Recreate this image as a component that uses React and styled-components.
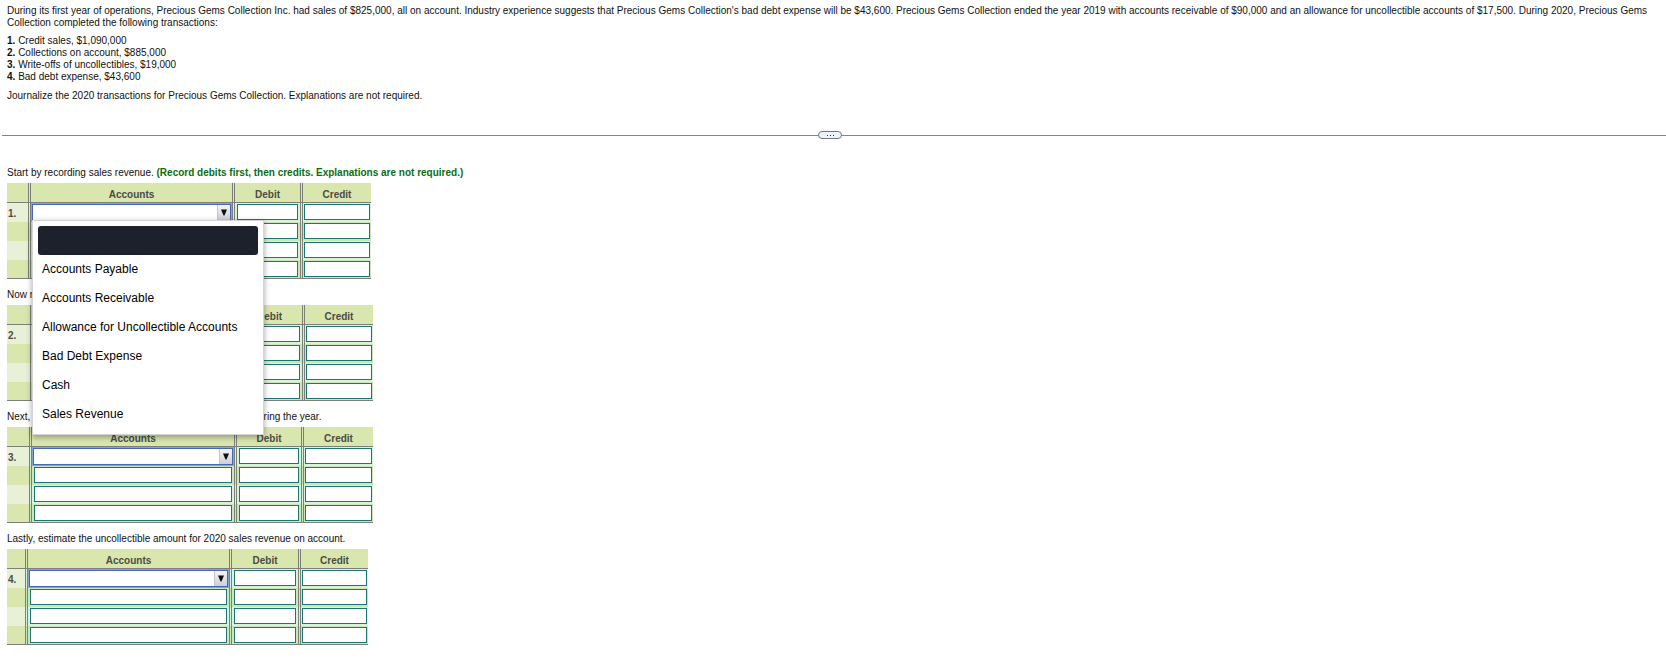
import React from 'react'
import { styled, createGlobalStyle } from 'styled-components'

const GlobalStyle = createGlobalStyle`
  * {
    box-sizing: border-box;
  }
  body {
    margin: 0;
    background-color: white;
    color: #111;
    font-family: "Liberation Sans", Arial, sans-serif;
    font-size: 10px;
    line-height: 12px;
  }
`;

const Page = styled.main`
  padding-top: 5px;
`;

const Problem = styled.section`
  padding: 0 7px;
`;

const Paragraph = styled.p`
  margin: 0 0 6px;
`;

const Transactions = styled.ol`
  margin: 0 0 7px;
  padding: 0;
  list-style: none;
`;

const Divider = styled.div`
  display: flex;
  align-items: center;
  height: 8px;
  margin: 29px 0 28px 2px;
`;

const Line = styled.span`
  flex: 1 1 ${({ $extra }) => $extra || 0}px;
  height: 1px;
  background-color: #7f8589;
`;

const Handle = styled.button`
  display: flex;
  align-items: center;
  justify-content: center;
  gap: 2px;
  width: 24px;
  height: 8px;
  padding: 0;
  border: 1px solid #6c7486;
  border-radius: 4px;
  background-color: #f0f3fb;
  cursor: row-resize;
`;

const Dot = styled.span`
  width: 1px;
  height: 1px;
  background-color: #2c3040;
`;

const Work = styled.section`
  padding: 0 7px 16px;
`;

const Entry = styled.div`
  display: flex;
  flex-direction: column;
  align-items: flex-start;
  margin-bottom: 10px;
`;

const Prompt = styled.p`
  margin: 0;
  height: 16px;
`;

const Hint = styled.strong`
  color: #0b6e12;
`;

const Journal = styled.table`
  table-layout: fixed;
  width: ${({ $width }) => $width}px;
  border-collapse: separate;
  border-spacing: 0;
  color: #4a4d45;
`;

const HeadCell = styled.th`
  width: ${({ $width }) => $width}px;
  height: 20px;
  padding: 4px 0 0;
  border-bottom: 1px solid #7c8076;
  border-left: ${({ $first }) => ($first ? 'none' : '3px double #7c8076')};
  background-color: #d9e6ae;
  line-height: 12px;
`;

const NumberCell = styled.th`
  height: 19px;
  padding: 2px 0 0 1px;
  border-bottom: ${({ $last }) => ($last ? '1px solid #7c8076' : 'none')};
  background-color: ${({ $odd }) => ($odd ? '#e8f1d8' : '#d9e6ae')};
  text-align: left;
`;

const Cell = styled.td`
  height: 19px;
  padding: ${({ $tight }) => ($tight ? '0' : '1px 2px 0')};
  border-bottom: ${({ $last }) => ($last ? '1px solid #7c8076' : 'none')};
  border-left: 3px double #7c8076;
  background-color: ${({ $odd }) => ($odd ? '#d6f3e0' : '#cbe7b9')};
  vertical-align: top;

  &:last-child {
    padding: 1px 1px 0;
  }
`;

const Field = styled.input`
  display: block;
  width: 100%;
  height: 16px;
  padding: 0 3px;
  border: 1px solid #1d7672;
  border-radius: 0;
  background-color: white;
  font: inherit;
  text-align: ${({ $amount }) => ($amount ? 'right' : 'left')};
`;

const SelectBox = styled.div`
  position: relative;
  border: 1px solid #86a3dc;
`;

const Select = styled.select`
  display: block;
  width: 100%;
  height: 17px;
  padding: 0 16px 0 3px;
  border: 1px solid #4568b8;
  border-radius: 0;
  background-color: white;
  font: inherit;
  appearance: none;
`;

const Arrow = styled.span`
  position: absolute;
  top: 1px;
  right: 1px;
  display: flex;
  align-items: center;
  justify-content: center;
  width: 13px;
  height: 15px;
  border-left: 1px solid #c4c6cf;
  background: linear-gradient(#f6f6f8, #cdcfd7);
  pointer-events: none;
`;

const Menu = styled.ul`
  position: absolute;
  top: 16px;
  left: 0;
  z-index: 2;
  width: 232px;
  margin: 0;
  padding: 5px;
  border: 1px solid #d4d4d4;
  background-color: white;
  box-shadow: 0 2px 6px rgba(0, 0, 0, 0.35);
  list-style: none;
`;

const Option = styled.li`
  height: 29px;
  padding: 0 4px;
  border-radius: 3px;
  background-color: ${({ $active }) => ($active ? '#1c212c' : 'white')};
  color: black;
  font-size: 12px;
  font-weight: normal;
  line-height: 29px;
`;

const accounts = [
  '',
  'Accounts Payable',
  'Accounts Receivable',
  'Allowance for Uncollectible Accounts',
  'Bad Debt Expense',
  'Cash',
  'Sales Revenue',
]

const transactions = [
  'Credit sales, $1,090,000',
  'Collections on account, $885,000',
  'Write-offs of uncollectibles, $19,000',
  'Bad debt expense, $43,600',
]

// widths: number, accounts, debit, credit
const entries = [
  {
    prompt: 'Start by recording sales revenue.',
    hint: '(Record debits first, then credits. Explanations are not required.)',
    widths: [21, 204, 68, 71],
    open: true,
  },
  {
    prompt: 'Now record collections on account.',
    widths: [23, 204, 68, 71],
  },
  {
    prompt: 'Next, record the write-offs of the uncollectible accounts during the year.',
    widths: [22, 205, 67, 72],
  },
  {
    prompt: 'Lastly, estimate the uncollectible amount for 2020 sales revenue on account.',
    widths: [18, 204, 69, 70],
  },
]

const AccountSelect = ({ label, open }) => {
  return (
    <SelectBox>
      <Select aria-label={label} defaultValue="">
        {accounts.map((name) => (
          <option key={name} value={name}>{name}</option>
        ))}
      </Select>
      <Arrow aria-hidden="true">
        <svg width="6" height="7" viewBox="0 0 6 7"><path d="M0 0.5h6L3.5 6.5h-1z" fill="#111" /></svg>
      </Arrow>
      {open && (
        <Menu role="listbox" aria-label="Accounts">
          {accounts.map((name, i) => (
            <Option key={name} role="option" aria-selected={i === 0} $active={i === 0}>{name}</Option>
          ))}
        </Menu>
      )}
    </SelectBox>
  )
}

const JournalTable = ({ number, widths, open }) => {
  const total = widths.reduce((sum, w) => sum + w, 0)
  return (
    <Journal $width={total}>
      <thead>
        <tr>
          <HeadCell $first $width={widths[0]} />
          <HeadCell $width={widths[1]}>Accounts</HeadCell>
          <HeadCell $width={widths[2]}>Debit</HeadCell>
          <HeadCell $width={widths[3]}>Credit</HeadCell>
        </tr>
      </thead>
      <tbody>
        {[0, 1, 2, 3].map((row) => {
          const shade = { $odd: row % 2 === 0, $last: row === 3 }
          const name = `Entry ${number} line ${row + 1}`
          return (
            <tr key={row}>
              <NumberCell {...shade}>{row === 0 && `${number}.`}</NumberCell>
              <Cell {...shade} $tight={row === 0}>
                {row === 0
                  ? <AccountSelect label={`${name} account`} open={open} />
                  : <Field aria-label={`${name} account`} />}
              </Cell>
              <Cell {...shade}><Field $amount aria-label={`${name} debit`} /></Cell>
              <Cell {...shade}><Field $amount aria-label={`${name} credit`} /></Cell>
            </tr>
          )
        })}
      </tbody>
    </Journal>
  )
}

const App = () => {
  return (
    <Page>
      <GlobalStyle />
      <Problem>
        <Paragraph>
          During its first year of operations, Precious Gems Collection Inc. had sales of $825,000, all on account. Industry experience suggests that Precious Gems Collection's bad debt expense will be $43,600. Precious Gems Collection ended the year 2019 with accounts receivable of $90,000 and an allowance for uncollectible accounts of $17,500. During 2020, Precious Gems Collection completed the following transactions:
        </Paragraph>
        <Transactions>
          {transactions.map((text, i) => (
            <li key={text}><b>{i + 1}.</b> {text}</li>
          ))}
        </Transactions>
        <Paragraph>
          Journalize the 2020 transactions for Precious Gems Collection. Explanations are not required.
        </Paragraph>
      </Problem>
      <Divider>
        <Line />
        <Handle aria-label="Resize panels">
          <Dot />
          <Dot />
          <Dot />
        </Handle>
        <Line $extra={8} />
      </Divider>
      <Work>
        {entries.map(({ prompt, hint, widths, open }, i) => (
          <Entry key={prompt}>
            <Prompt>{prompt} {hint && <Hint>{hint}</Hint>}</Prompt>
            <JournalTable number={i + 1} widths={widths} open={open} />
          </Entry>
        ))}
      </Work>
    </Page>
  )
}

export default App
